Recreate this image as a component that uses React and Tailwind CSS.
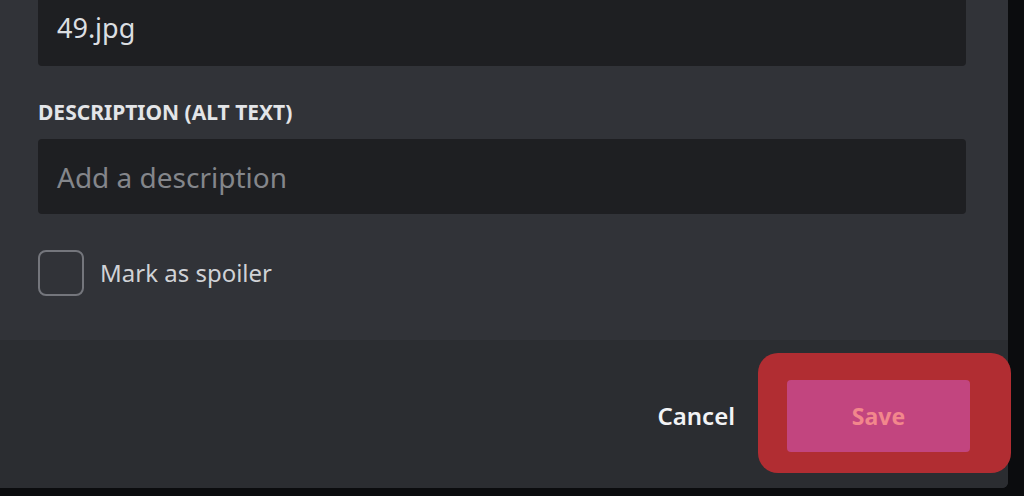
import React from 'react';

const font = { fontFamily: '"Noto Sans", "Open Sans", Arial, sans-serif' };

export default function App() {
  return (
    <div className="w-[1024px] h-[496px] bg-[#0b0c0e] overflow-hidden" style={font}>
      {/* Modal */}
      <div className="w-[1008px] h-[488px] bg-[#313338] rounded-br-[6px] flex flex-col">
        {/* Body */}
        <div className="h-[340px] px-[38px] pr-[42px] flex flex-col">
          <div className="-mt-[9px] h-[75px] bg-[#1e1f22] rounded-[4px] flex items-center px-[19px] text-[27px] text-[#dbdee1]">
            49.jpg
          </div>

          <div className="mt-[34px] mb-[15px] h-[24px] leading-[24px] text-[21px] font-bold text-[#e3e5e8]">
            DESCRIPTION (ALT TEXT)
          </div>

          <div className="h-[75px] bg-[#1e1f22] rounded-[4px] flex items-center px-[19px] text-[28px] text-[#84868b]">
            Add a description
          </div>

          <label className="mt-[36px] flex items-center gap-[16px]">
            <span className="w-[46px] h-[46px] rounded-[8px] border-2 border-[#74767c]" />
            <span className="text-[24px] text-[#d0d2d6]">Mark as spoiler</span>
          </label>
        </div>

        {/* Footer */}
        <div className="flex-1 bg-[#2b2d31] rounded-br-[6px] flex items-center justify-end pr-[38px] pt-[4px]">
          <button className="mr-[52px] text-[24px] font-semibold text-[#f2f3f5]">Cancel</button>
          <div className="relative">
            <div className="absolute -left-[29px] -right-[41px] -top-[27px] -bottom-[21px] rounded-[20px] bg-[#b12d32]" />
            <button className="relative w-[183px] h-[72px] rounded-[4px] bg-[#c2457f] text-[23px] font-bold text-[#f2878c]">
              Save
            </button>
          </div>
        </div>
      </div>
    </div>
  );
}
